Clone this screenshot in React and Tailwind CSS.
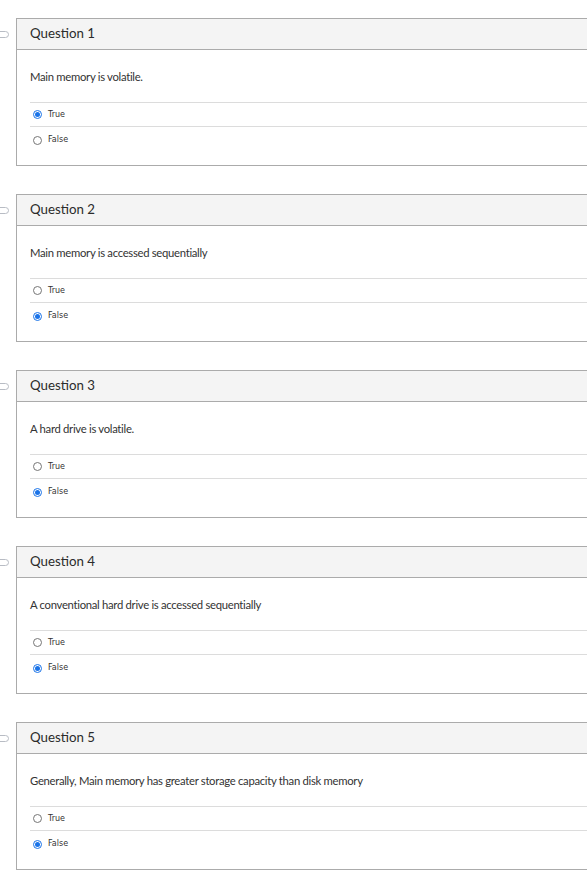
import React from 'react'

const questions = [
  { n: 1, text: 'Main memory is volatile.', answer: 'True' },
  { n: 2, text: 'Main memory is accessed sequentially', answer: 'False' },
  { n: 3, text: 'A hard drive is volatile.', answer: 'False' },
  { n: 4, text: 'A conventional hard drive is accessed sequentially', answer: 'False' },
  { n: 5, text: 'Generally, Main memory has greater storage capacity than disk memory', answer: 'False' },
]

const Radio = ({ checked }) => (
  checked ? (
    <span className='flex h-[9px] w-[9px] items-center justify-center rounded-full border border-[#1a73e8] bg-white'>
      <span className='h-[5px] w-[5px] rounded-full bg-[#1a73e8]' />
    </span>
  ) : (
    <span className='h-[9px] w-[9px] rounded-full border border-[#767676] bg-white' />
  )
)

const Option = ({ label, checked, last }) => (
  <div className={last ? 'flex h-[26px] items-center gap-[6px] pl-[3px]' : 'flex h-[23px] items-center gap-[6px] pl-[3px]'}>
    <Radio checked={checked} />
    <span className='text-[8px] text-[#333]' style={{ fontFamily: '"DejaVu Sans", sans-serif' }}>{label}</span>
  </div>
)

const Question = ({ q }) => (
  <div className='flex'>
    <div className='w-[16px] shrink-0 overflow-hidden pt-[13px]'>
      <svg width='16' height='8' viewBox='0 0 16 8'>
        <rect x='-8' y='0.5' width='16.5' height='6' rx='3' fill='none' stroke='#b8bcc4' strokeWidth='1' />
      </svg>
    </div>
    <div className='w-[600px] shrink-0 border border-[#ababab] bg-white' style={{ fontFamily: 'Lato, sans-serif' }}>
      <div className='flex h-[31px] items-center border-b border-[#ababab] bg-[#f4f4f4] pl-[13px] text-[13.3px] text-[#2b2b2b]'>
        Question {q.n}
      </div>
      <div className='pl-[13px]'>
        <div className='flex h-[52px] items-center pt-[2px] text-[11.3px] tracking-[-0.3px] text-[#333]'>{q.text}</div>
        <div className='border-t border-[#dcdcdc]'>
          <Option label='True' checked={q.answer === 'True'} />
        </div>
        <div className='border-t border-[#dcdcdc]'>
          <Option label='False' checked={q.answer === 'False'} last />
        </div>
        <div className='h-[12px]' />
      </div>
    </div>
  </div>
)

export default function App() {
  return (
    <div className='min-h-[878px] overflow-hidden bg-white pt-[18px]'>
      <div className='flex flex-col gap-[28px]'>
        {questions.map((q) => (
          <Question key={q.n} q={q} />
        ))}
      </div>
    </div>
  )
}
